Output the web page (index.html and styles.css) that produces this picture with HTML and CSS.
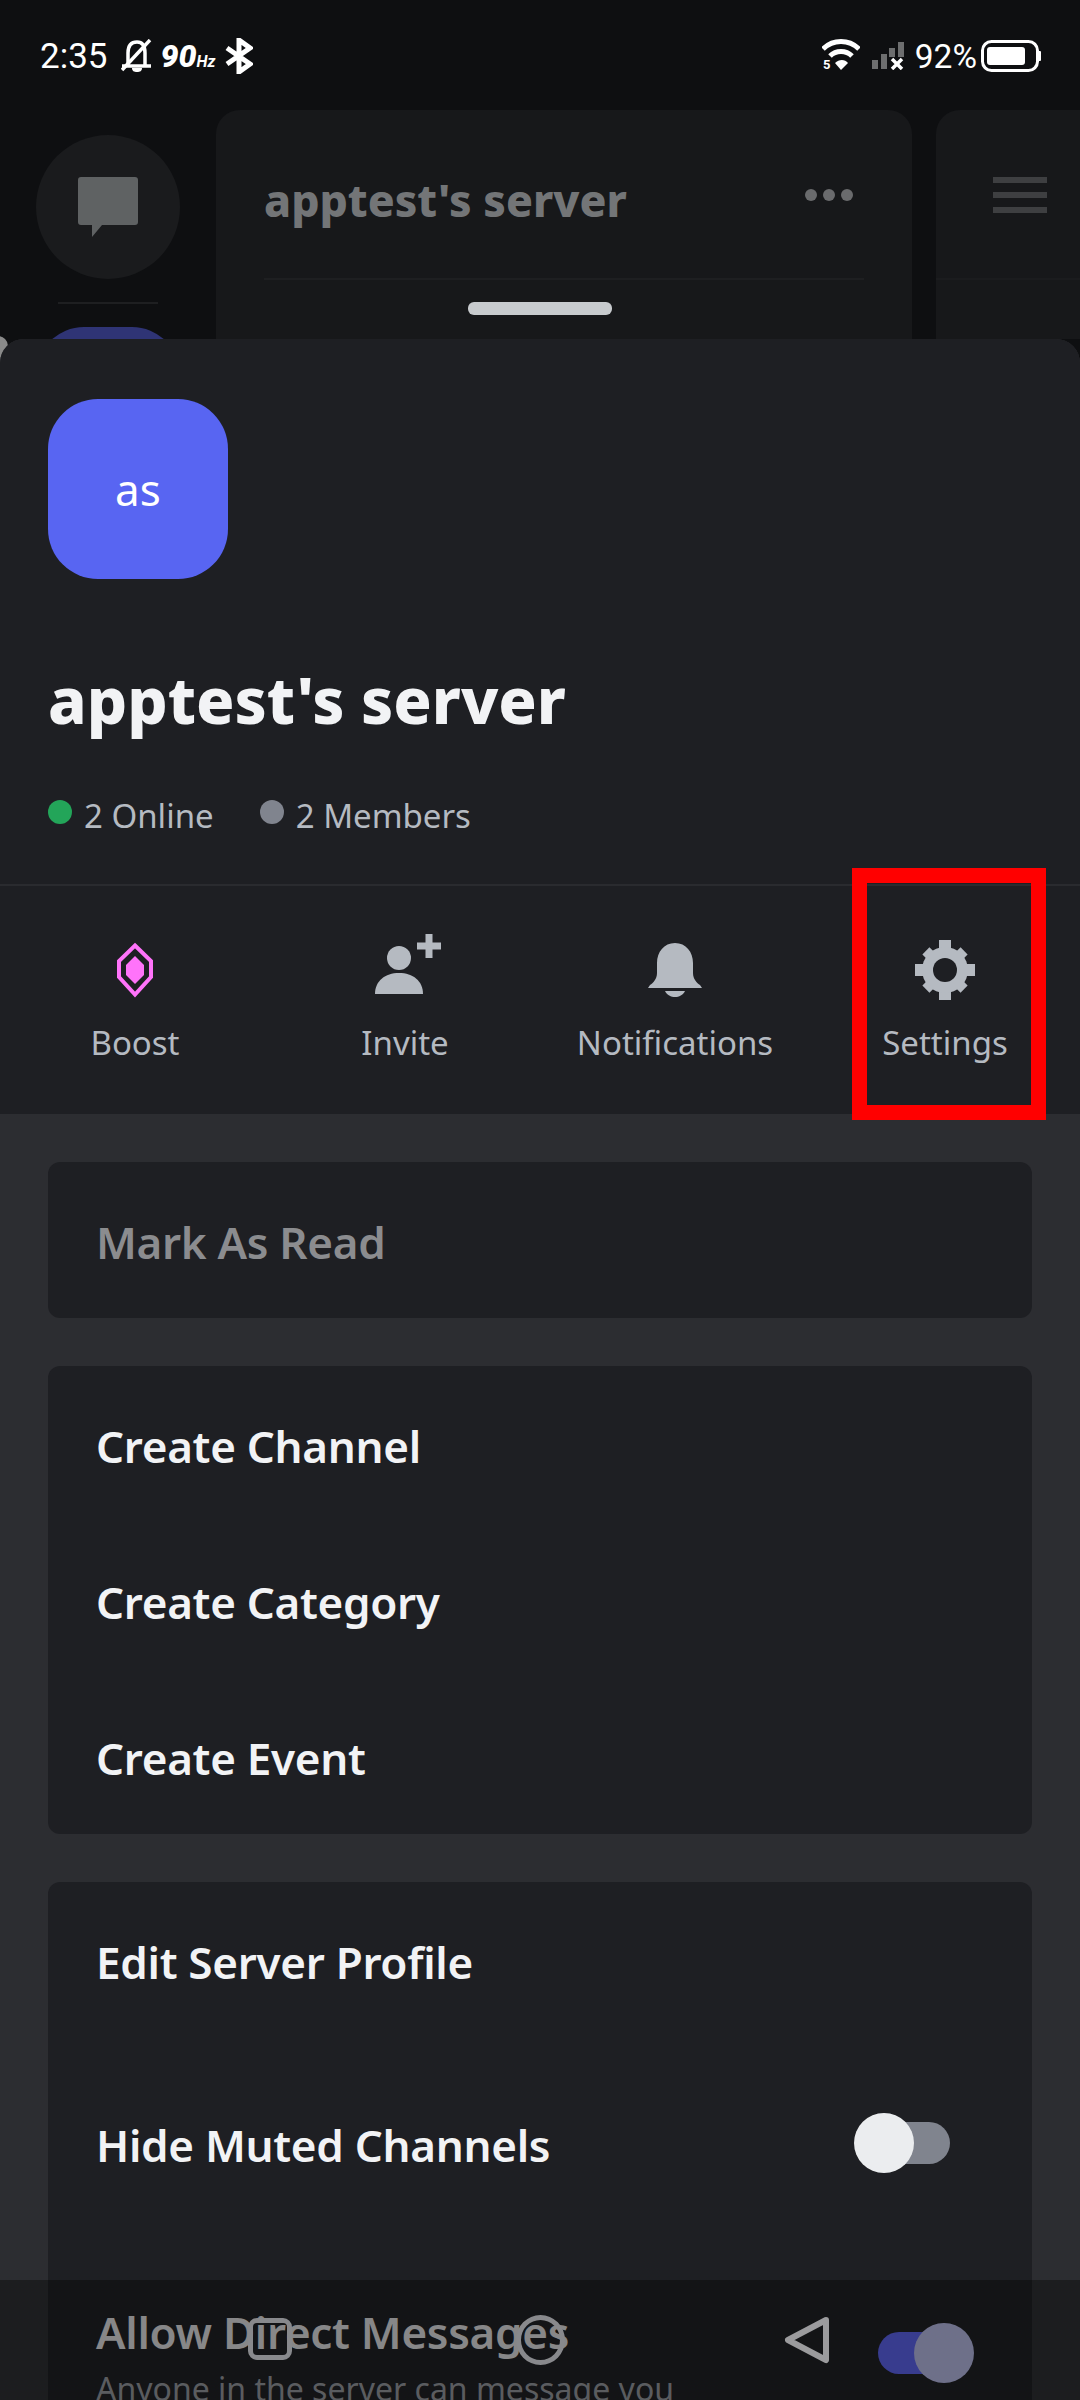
FILE: index.html
```html
<!DOCTYPE html>
<html lang="en">

<head>
    <meta charset="UTF-8">
    <meta name="viewport" content="width=device-width, initial-scale=1.0">
    <title>apptest's server</title>
    <link rel="stylesheet" href="styles.css">
</head>

<body>
    <div class="tela">
        <div class="fundo">
            <div class="status">
                <div class="status-lado">
                    <span class="hora">2:35</span>
                    <svg class="ic-sino" width="32" height="34" viewBox="0 0 32 34">
                        <path d="M7 26V14C7 6 11 3 16 3C21 3 24 6 24 14V26" fill="none" stroke="#fff" stroke-width="3.5"/>
                        <path d="M1 27H30" stroke="#fff" stroke-width="3.5"/>
                        <path d="M11 29H21C21 32 19 33 16 33C13 33 11 32 11 29Z" fill="#fff"/>
                        <path d="M29 1L1 31" stroke="#fff" stroke-width="3.5"/>
                    </svg>
                    <span class="hz"><b>90</b><small>Hz</small></span>
                    <svg class="ic-bt" width="28" height="36" viewBox="0 0 28 36">
                        <path d="M2 10L25 26L14 34V2L25 10L2 26" fill="none" stroke="#fff" stroke-width="5"/>
                    </svg>
                </div>
                <div class="status-lado">
                    <svg class="ic-wifi" width="38" height="34" viewBox="0 0 38 34">
                        <path d="M1 10C11 0 27 0 37 10" fill="none" stroke="#fff" stroke-width="5"/>
                        <path d="M8 17C14 11 24 11 30 17" fill="none" stroke="#fff" stroke-width="5"/>
                        <path d="M13 24C17 20 23 20 26 24L19 31Z" fill="#fff"/>
                        <text x="1" y="30" class="wifi-5">5</text>
                    </svg>
                    <svg class="ic-sinal" width="32" height="28" viewBox="0 0 32 28">
                        <rect x="0" y="18" width="6" height="9" fill="#6d6e6f"/>
                        <rect x="9" y="12" width="6" height="15" fill="#6d6e6f"/>
                        <rect x="17" y="6" width="6" height="9" fill="#6d6e6f"/>
                        <rect x="26" y="0" width="6" height="15" fill="#6d6e6f"/>
                        <path d="M20 17L30 27M30 17L20 27" stroke="#fff" stroke-width="3.5"/>
                    </svg>
                    <span class="bateria-txt">92%</span>
                    <svg class="ic-bateria" width="60" height="32" viewBox="0 0 60 32">
                        <rect x="1.5" y="1.5" width="55" height="29" rx="9" fill="none" stroke="#fff" stroke-width="3"/>
                        <rect x="6" y="7" width="38" height="18" rx="3" fill="#fff"/>
                        <rect x="57" y="11" width="3" height="10" rx="1" fill="#fff"/>
                    </svg>
                </div>
            </div>
            <div class="fundo-colunas">
                <div class="trilho">
                    <div class="trilho-dm">
                        <svg width="60" height="60" viewBox="0 0 60 60">
                            <path d="M3 0H57C59 0 60 1 60 3V45C60 47 59 48 57 48H24L14 60V48H3C1 48 0 47 0 45V3C0 1 1 0 3 0Z" fill="#5f6263"/>
                        </svg>
                    </div>
                    <div class="trilho-sep"></div>
                    <div class="trilho-server"></div>
                </div>
                <div class="fundo-card">
                    <div class="fundo-topo">
                        <span class="fundo-titulo">apptest's server</span>
                        <div class="pontos"><i></i><i></i><i></i></div>
                    </div>
                </div>
                <div class="fundo-card fundo-card-dir">
                    <div class="fundo-topo-dir">
                        <div class="hamburguer"><i></i><i></i><i></i></div>
                    </div>
                </div>
            </div>
            <div class="puxador"></div>
        </div>

        <div class="folha">
            <div class="cabecalho">
                <div class="avatar">as</div>
                <h1 class="nome">apptest's server</h1>
                <div class="contagem">
                    <span class="bolinha verde"></span><span class="contagem-txt">2 Online</span>
                    <span class="bolinha cinza"></span><span class="contagem-txt">2 Members</span>
                </div>
            </div>
            <div class="acoes">
                <div class="acao">
                    <svg width="60" height="60" viewBox="0 0 60 60">
                        <path d="M30 5.500L46 21V37L30 54.500L14 37V21Z" fill="none" stroke="#ff73fa" stroke-width="4"/>
                        <path d="M30 16L39 25V35L30 44L21 35V25Z" fill="#ff73fa"/>
                    </svg>
                    <span>Boost</span>
                </div>
                <div class="acao">
                    <svg class="ic-solta" width="72" height="60" viewBox="0 0 72 60">
                        <circle cx="30" cy="18" r="12" fill="#b5bac1"/>
                        <path d="M6 54C6 41 16 33 30 33C44 33 54 41 54 54Z" fill="#b5bac1"/>
                        <path d="M56.500 -6H63.500V2.500H72V9.500H63.500V18H56.500V9.500H48V2.500H56.500Z" fill="#b5bac1"/>
                    </svg>
                    <span>Invite</span>
                </div>
                <div class="acao">
                    <svg width="54" height="60" viewBox="0 0 54 60">
                        <path d="M27 3C16 3 9 12 9 23V33C9 39 5 43 2 45L0 48H54L52 45C49 43 45 39 45 33V23C45 12 38 3 27 3Z" fill="#b5bac1"/>
                        <path d="M17 51H37C35 55 31 57 27 57C23 57 19 55 17 51Z" fill="#b5bac1"/>
                    </svg>
                    <span>Notifications</span>
                </div>
                <div class="acao">
                    <svg width="60" height="60" viewBox="0 0 60 60">
                        <g fill="#b5bac1">
                            <rect x="24" y="0" width="12" height="60"/>
                            <rect x="0" y="24" width="60" height="12"/>
                            <rect x="25" y="3" width="10" height="54" transform="rotate(45 30 30)"/>
                            <rect x="25" y="3" width="10" height="54" transform="rotate(-45 30 30)"/>
                            <circle cx="30" cy="30" r="23"/>
                        </g>
                        <circle cx="30" cy="30" r="12" fill="#1e1f23"/>
                    </svg>
                    <span>Settings</span>
                </div>
            </div>
            <div class="lista">
                <div class="grupo">
                    <div class="linha apagada">Mark As Read</div>
                </div>
                <div class="grupo">
                    <div class="linha">Create Channel</div>
                    <div class="linha">Create Category</div>
                    <div class="linha">Create Event</div>
                </div>
                <div class="grupo">
                    <div class="linha">Edit Server Profile</div>
                    <div class="linha linha-alta">
                        Hide Muted Channels
                        <div class="chave"><div class="chave-bola"></div></div>
                    </div>
                    <div class="linha linha-dupla">
                        <div class="dupla-txt">
                            <div>Allow Direct Messages</div>
                            <div class="sub">Anyone in the server can message you</div>
                        </div>
                        <div class="chave ligada"><div class="chave-bola"></div></div>
                    </div>
                </div>
            </div>
        </div>

        <div class="marca-settings"></div>

        <div class="nav">
            <div class="nav-recentes"></div>
            <div class="nav-home"></div>
            <svg class="nav-voltar" width="46" height="48" viewBox="0 0 46 48">
                <path d="M42 4L4 24L42 44Z" fill="none" stroke="#9b9b9d" stroke-width="6" stroke-linejoin="round"/>
            </svg>
        </div>
    </div>
</body>

</html>
```

FILE: styles.css
```css
* {
    box-sizing: border-box;
}

body {
    margin: 0;
    background-color: #0e0f11;
    font-family: "Noto Sans", sans-serif;
}

.tela {
    position: relative;
    width: 1080px;
    height: 2400px;
    overflow: hidden;
}

/* pedaco cinza que aparece no canto da folha */
.tela::before {
    content: "";
    position: absolute;
    left: -12px;
    top: 336px;
    width: 20px;
    height: 32px;
    border-radius: 10px;
    background-color: #8a8a8a;
}

/* tela de tras, escurecida */
.fundo {
    position: relative;
    height: 339px;
    overflow: hidden;
}

.status {
    display: flex;
    justify-content: space-between;
    align-items: center;
    height: 110px;
    padding: 2px 39px 0 40px;
    color: #fff;
    font-family: Roboto, sans-serif;
}

.status-lado {
    display: flex;
    align-items: center;
}

.hora {
    font-size: 35px;
}

.ic-sino {
    margin-left: 13px;
}

.hz {
    margin-left: 8px;
    width: 54px;
    font-style: italic;
    font-weight: 700;
    white-space: nowrap;
}

.hz b {
    font-size: 32px;
}

.hz small {
    font-size: 16px;
}

.ic-bt {
    margin-left: 10px;
}

.wifi-5 {
    font-size: 13px;
    font-weight: 700;
    fill: #fff;
    font-family: Roboto, sans-serif;
}

.ic-sinal {
    margin-left: 12px;
}

.bateria-txt {
    margin-left: 11px;
    font-size: 33.500px;
}

.ic-bateria {
    margin-left: 4px;
}

.fundo-colunas {
    display: flex;
    gap: 24px;
}

.trilho {
    width: 192px;
    flex-shrink: 0;
    display: flex;
    flex-direction: column;
    align-items: center;
    padding: 25px 0 0 24px;
}

.trilho-dm {
    width: 144px;
    height: 144px;
    border-radius: 50%;
    background-color: #1a1b1d;
    display: flex;
    align-items: center;
    justify-content: center;
}

.trilho-sep {
    width: 100px;
    height: 2px;
    margin-top: 23px;
    background-color: #1e1f21;
}

.trilho-server {
    width: 144px;
    height: 144px;
    flex-shrink: 0;
    margin-top: 23px;
    border-radius: 48px;
    background-color: #2f3475;
}

.fundo-card {
    width: 696px;
    height: 300px;
    flex-shrink: 0;
    border-radius: 24px 24px 0 0;
    background-color: #17181a;
    padding: 0 48px;
}

.fundo-card-dir {
    width: 200px;
    padding: 0;
}

.fundo-topo {
    display: flex;
    justify-content: space-between;
    height: 170px;
    padding-top: 61px;
    border-bottom: 2px solid #1e1f21;
}

.fundo-titulo {
    color: #737577;
    font-size: 44.500px;
    font-weight: 800;
    line-height: 58px;
}

.pontos {
    display: flex;
    gap: 6px;
    padding: 18px 11px 0 0;
}

.pontos i {
    width: 12px;
    height: 12px;
    border-radius: 50%;
    background-color: #6a6b6d;
}

.fundo-topo-dir {
    height: 170px;
    padding: 67px 0 0 57px;
    border-bottom: 2px solid #1b1c1e;
}

.hamburguer {
    display: flex;
    flex-direction: column;
    gap: 9px;
    width: 54px;
}

.hamburguer i {
    height: 6px;
    background-color: #3e3f41;
}

.puxador {
    position: absolute;
    left: 468px;
    top: 302px;
    width: 144px;
    height: 13px;
    border-radius: 6px;
    background-color: #c8cbce;
}

/* folha do menu */
.folha {
    position: relative;
    border-radius: 24px 24px 0 0;
    overflow: hidden;
    background-color: #2c2d31;
}

.cabecalho {
    height: 547px;
    padding: 60px 48px 0;
    background-color: #1e1f23;
    border-bottom: 2px solid #2a2b2f;
}

.avatar {
    width: 180px;
    height: 180px;
    border-radius: 50px;
    background-color: #5865f2;
    color: #fff;
    font-size: 44px;
    display: flex;
    align-items: center;
    justify-content: center;
}

.nome {
    margin: 79px 0 0;
    color: #f2f3f5;
    font-size: 63.500px;
    font-weight: 800;
    line-height: 84px;
}

.contagem {
    display: flex;
    align-items: center;
    margin-top: 53px;
    height: 40px;
    color: #b5bac1;
    font-size: 33px;
}

.bolinha {
    width: 24px;
    height: 24px;
    border-radius: 50%;
    margin-top: -6px;
}

.verde {
    background-color: #23a559;
}

.cinza {
    background-color: #80848e;
}

.contagem-txt {
    margin-left: 12px;
    margin-right: 46px;
}

.acoes {
    display: grid;
    grid-template-columns: repeat(4, 270px);
    height: 228px;
    padding-top: 54px;
    background-color: #1e1f23;
}

.acao {
    display: flex;
    flex-direction: column;
    align-items: center;
    gap: 21px;
    color: #b5bac1;
    font-size: 33px;
    line-height: 44px;
}

.ic-solta {
    overflow: visible;
}

.lista {
    display: flex;
    flex-direction: column;
    gap: 48px;
    padding: 48px;
}

.grupo {
    border-radius: 12px;
    background-color: #1e1f23;
    overflow: hidden;
}

.linha {
    display: flex;
    align-items: center;
    justify-content: space-between;
    height: 156px;
    padding: 3px 48px 0;
    color: #f2f3f5;
    font-size: 44px;
    font-weight: 600;
    letter-spacing: -0.3px;
}

.apagada {
    color: #8b8c8f;
}

.linha-alta {
    height: 210px;
}

.linha-dupla {
    height: 240px;
    align-items: flex-start;
    padding-top: 53px;
    color: #cfd0d2;
}

.dupla-txt {
    line-height: 62px;
}

.sub {
    color: #8b8e93;
    font-size: 32px;
    font-weight: 400;
    letter-spacing: 0;
    line-height: 52px;
}

.chave {
    position: relative;
    flex-shrink: 0;
    width: 72px;
    height: 42px;
    margin-right: 34px;
    border-radius: 21px;
    background-color: #80848e;
}

.linha-alta .chave {
    margin-top: -3px;
}

.chave-bola {
    position: absolute;
    left: -24px;
    top: -9px;
    width: 60px;
    height: 60px;
    border-radius: 50%;
    background-color: #ebedef;
}

.ligada {
    margin-top: 31px;
    background-color: #565cda;
}

.ligada .chave-bola {
    left: 36px;
    background-color: #a9acd3;
}

/* marcacao vermelha sobre o item Settings */
.marca-settings {
    position: absolute;
    left: 852px;
    top: 868px;
    width: 194px;
    height: 252px;
    border: 15px solid #ff0000;
}

/* barra de navegacao translucida */
.nav {
    position: absolute;
    left: 0;
    right: 0;
    bottom: 0;
    height: 120px;
    background-color: rgba(0, 0, 0, 0.35);
}

.nav-recentes {
    position: absolute;
    left: 248px;
    top: 38px;
    width: 44px;
    height: 42px;
    border: 5px solid #88898c;
    border-radius: 9px;
}

.nav-home {
    position: absolute;
    left: 516px;
    top: 35px;
    width: 49px;
    height: 50px;
    border: 5px solid #88898c;
    border-radius: 50%;
}

.nav-voltar {
    position: absolute;
    left: 784px;
    top: 36px;
}
```
